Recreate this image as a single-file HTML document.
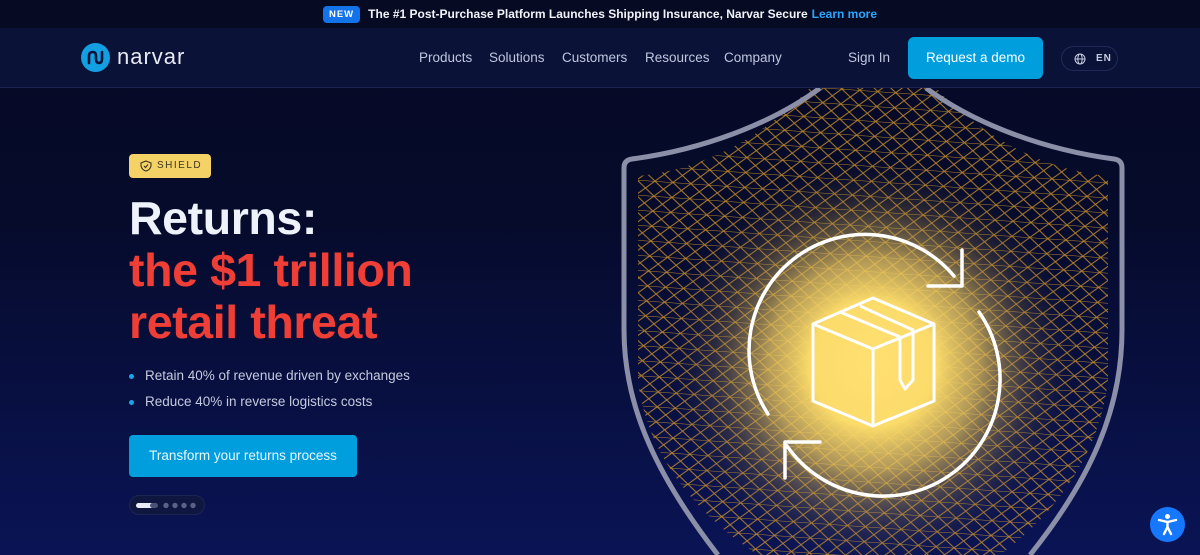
<!DOCTYPE html>
<html><head><meta charset="utf-8"><style>
*{margin:0;padding:0;box-sizing:border-box}
body{width:1200px;height:555px;overflow:hidden;font-family:"Liberation Sans",sans-serif;background:linear-gradient(180deg,#050a24 0%,#060b2c 40%,#0a1455 100%);position:relative;color:#fff}
.top{position:absolute;left:0;top:0;width:1200px;height:28px;background:#060a22;font-size:12px;font-weight:bold;color:#f1f3f8;display:flex;align-items:center;justify-content:center}
.new{background:#1273ea;border-radius:4px;font-size:9.5px;letter-spacing:1px;padding:3px 6px;margin-right:8px;color:#fff}
.top a{color:#2aa7ff;margin-left:4px}
.hdr{position:absolute;left:0;top:28px;width:1200px;height:60px;background:#0b1238;border-bottom:1px solid #1b2250;z-index:3}
.logo{position:absolute;left:81px;top:15px;width:29px;height:29px;border-radius:50%;background:#12a0e3}
.logotxt{position:absolute;left:117px;top:16px;font-size:22px;color:#e8ebf5;letter-spacing:1px}
.nav{position:absolute;top:22px;font-size:13.5px;color:#bfc6de}
.btn{position:absolute;left:908px;top:9px;width:135px;height:42px;background:#009edd;border-radius:6px;color:#fff;font-size:13.5px;text-align:center;line-height:42px}
.lang{position:absolute;left:1061px;top:18px;width:57px;height:25px;border:1px solid #222a58;border-radius:13px;font-size:10px;color:#c7cde0;font-weight:bold;letter-spacing:1px;line-height:23px;padding-left:34px}
.badge{position:absolute;left:129px;top:154px;width:82px;height:24px;background:#f5d266;border-radius:4px;font-size:10px;letter-spacing:1.5px;color:#3b3520;line-height:24px;padding-left:28px}
h1{position:absolute;left:129px;top:192px;font-size:46.5px;line-height:52px;font-weight:bold;letter-spacing:-0.4px}
.w{color:#eef2fb}.r{color:#ef3e36}
ul{position:absolute;left:129px;top:368px;list-style:none;font-size:13.5px;color:#c4cade}
li{height:26px;padding-left:16px;position:relative}
li:before{content:"";position:absolute;left:0;top:6px;width:5px;height:5px;border-radius:50%;background:#16a7eb}
.cta{position:absolute;left:129px;top:435px;width:228px;height:42px;background:#009edd;border-radius:4px;color:#eaf6ff;font-size:13.5px;text-align:center;line-height:42px}
.dots{position:absolute;left:129px;top:495px;width:76px;height:20px;border-radius:10px;background:#0f1740;border:1px solid #1c2552}
.acc{position:absolute;left:1150px;top:507px;width:35px;height:35px;border-radius:50%;background:#1677ff}
</style></head><body>
<div class="top"><span class="new">NEW</span>The #1 Post-Purchase Platform Launches Shipping Insurance, Narvar Secure<a>Learn more</a></div>

<svg style="position:absolute;left:0;top:0" width="1200" height="555">
<defs>
<pattern id="mesh" width="18" height="15" patternUnits="userSpaceOnUse" patternTransform="rotate(4)">
<path d="M0 0L18 15M18 0L0 15M0 0H18" stroke="#d99a28" stroke-width="0.9" fill="none"/>
</pattern>
<radialGradient id="glow" cx="873" cy="364" r="210" gradientUnits="userSpaceOnUse">
<stop offset="0" stop-color="#ffe071"/><stop offset="0.3" stop-color="#fbdb6a"/><stop offset="0.5" stop-color="#e8c560" stop-opacity="0.75"/><stop offset="0.75" stop-color="#a08650" stop-opacity="0.25"/><stop offset="1" stop-color="#0a1040" stop-opacity="0"/>
</radialGradient>
<clipPath id="sh"><path d="M638 176 C700 170 760 140 810 88 L936 88 C986 140 1046 170 1108 176 L1108 380 C1100 450 1060 510 1000 555 L758 555 C690 510 646 450 638 380Z"/></clipPath>
</defs>
<g clip-path="url(#sh)">
<rect x="620" y="80" width="500" height="480" fill="url(#mesh)" opacity="0.85"/>
<rect x="620" y="80" width="500" height="480" fill="url(#glow)"/>
</g>
<path d="M718 555 C660 480 624 410 624 330 L624 168 Q624 160 632 159 C700 150 770 125 820 88 M926 88 C976 125 1046 150 1114 159 Q1122 160 1122 168 L1122 330 C1122 410 1090 480 1030 555" stroke="#8b8fa8" stroke-width="5" fill="none"/>
<g stroke="#fff" stroke-width="3.5" fill="none" stroke-linecap="round" stroke-linejoin="round">
<path d="M768 414 A116 116 0 0 1 954 276"/>
<path d="M962 250 V286 H928"/>
<path d="M979 312 A116 116 0 0 1 787 446"/>
<path d="M785 478 V442 H820"/>
</g>
<g stroke="#fff" stroke-width="3" fill="none" stroke-linejoin="round">
<path d="M813 324 L873 298 L934 324 L934 401 L873 426 L813 401 Z"/>
<path d="M813 324 L873 349 L934 324 M873 349 V426"/>
<path d="M840 312 L900 337 V380 L905 389 L913 380 V330 L860 306"/>
</g>
</svg>

<div class="hdr">
<div class="logo"><svg width="29" height="29"><path d="M8 20 V13 Q8 9 12 9 Q15 9 15 13 V16 Q15 20 18 20 Q21 20 21 16 V9" stroke="#0b1238" stroke-width="2.6" fill="none" stroke-linecap="round"/></svg></div>
<div class="logotxt">narvar</div>
<div class="nav" style="left:419px">Products</div>
<div class="nav" style="left:489px">Solutions</div>
<div class="nav" style="left:562px">Customers</div>
<div class="nav" style="left:645px">Resources</div>
<div class="nav" style="left:724px">Company</div>
<div class="nav" style="left:848px">Sign In</div>
<div class="btn">Request a demo</div>
<div class="lang"><svg style="position:absolute;left:12px;top:6px" width="12" height="12"><circle cx="6" cy="6" r="5" stroke="#c7cde0" fill="none"/><ellipse cx="6" cy="6" rx="2.2" ry="5" stroke="#c7cde0" fill="none"/><path d="M1 6H11" stroke="#c7cde0"/></svg>EN</div>
</div>

<div class="badge"><svg style="position:absolute;left:11px;top:6px" width="12" height="12"><path d="M6 1 L11 3 V6 Q10 10 6 11 Q2 10 1 6 V3Z M4 6 L5.5 7.5 L8 4.5" stroke="#3b3520" fill="none" stroke-width="1.1"/></svg>SHIELD</div>
<h1><span class="w">Returns:</span><br><span class="r">the $1 trillion<br>retail threat</span></h1>
<ul><li>Retain 40% of revenue driven by exchanges</li><li>Reduce 40% in reverse logistics costs</li></ul>
<div class="cta">Transform your returns process</div>
<div class="dots"><svg width="76" height="20"><rect x="6" y="7" width="18" height="5" rx="2.5" fill="#e8ecf7"/><rect x="20" y="7" width="8" height="5" rx="2.5" fill="#4a5278"/><circle cx="36" cy="9.5" r="2.7" fill="#5a6288"/><circle cx="45" cy="9.5" r="2.7" fill="#5a6288"/><circle cx="54" cy="9.5" r="2.7" fill="#5a6288"/><circle cx="63" cy="9.5" r="2.7" fill="#5a6288"/></svg></div>
<div class="acc"><svg width="35" height="35"><circle cx="17.5" cy="9.5" r="2.5" fill="#fff"/><path d="M9 13 L17.5 15 L26 13 M17.5 15 V20 L14 27 M17.5 20 L21 27" stroke="#fff" stroke-width="2.4" fill="none" stroke-linecap="round"/></svg></div>
</body></html>
